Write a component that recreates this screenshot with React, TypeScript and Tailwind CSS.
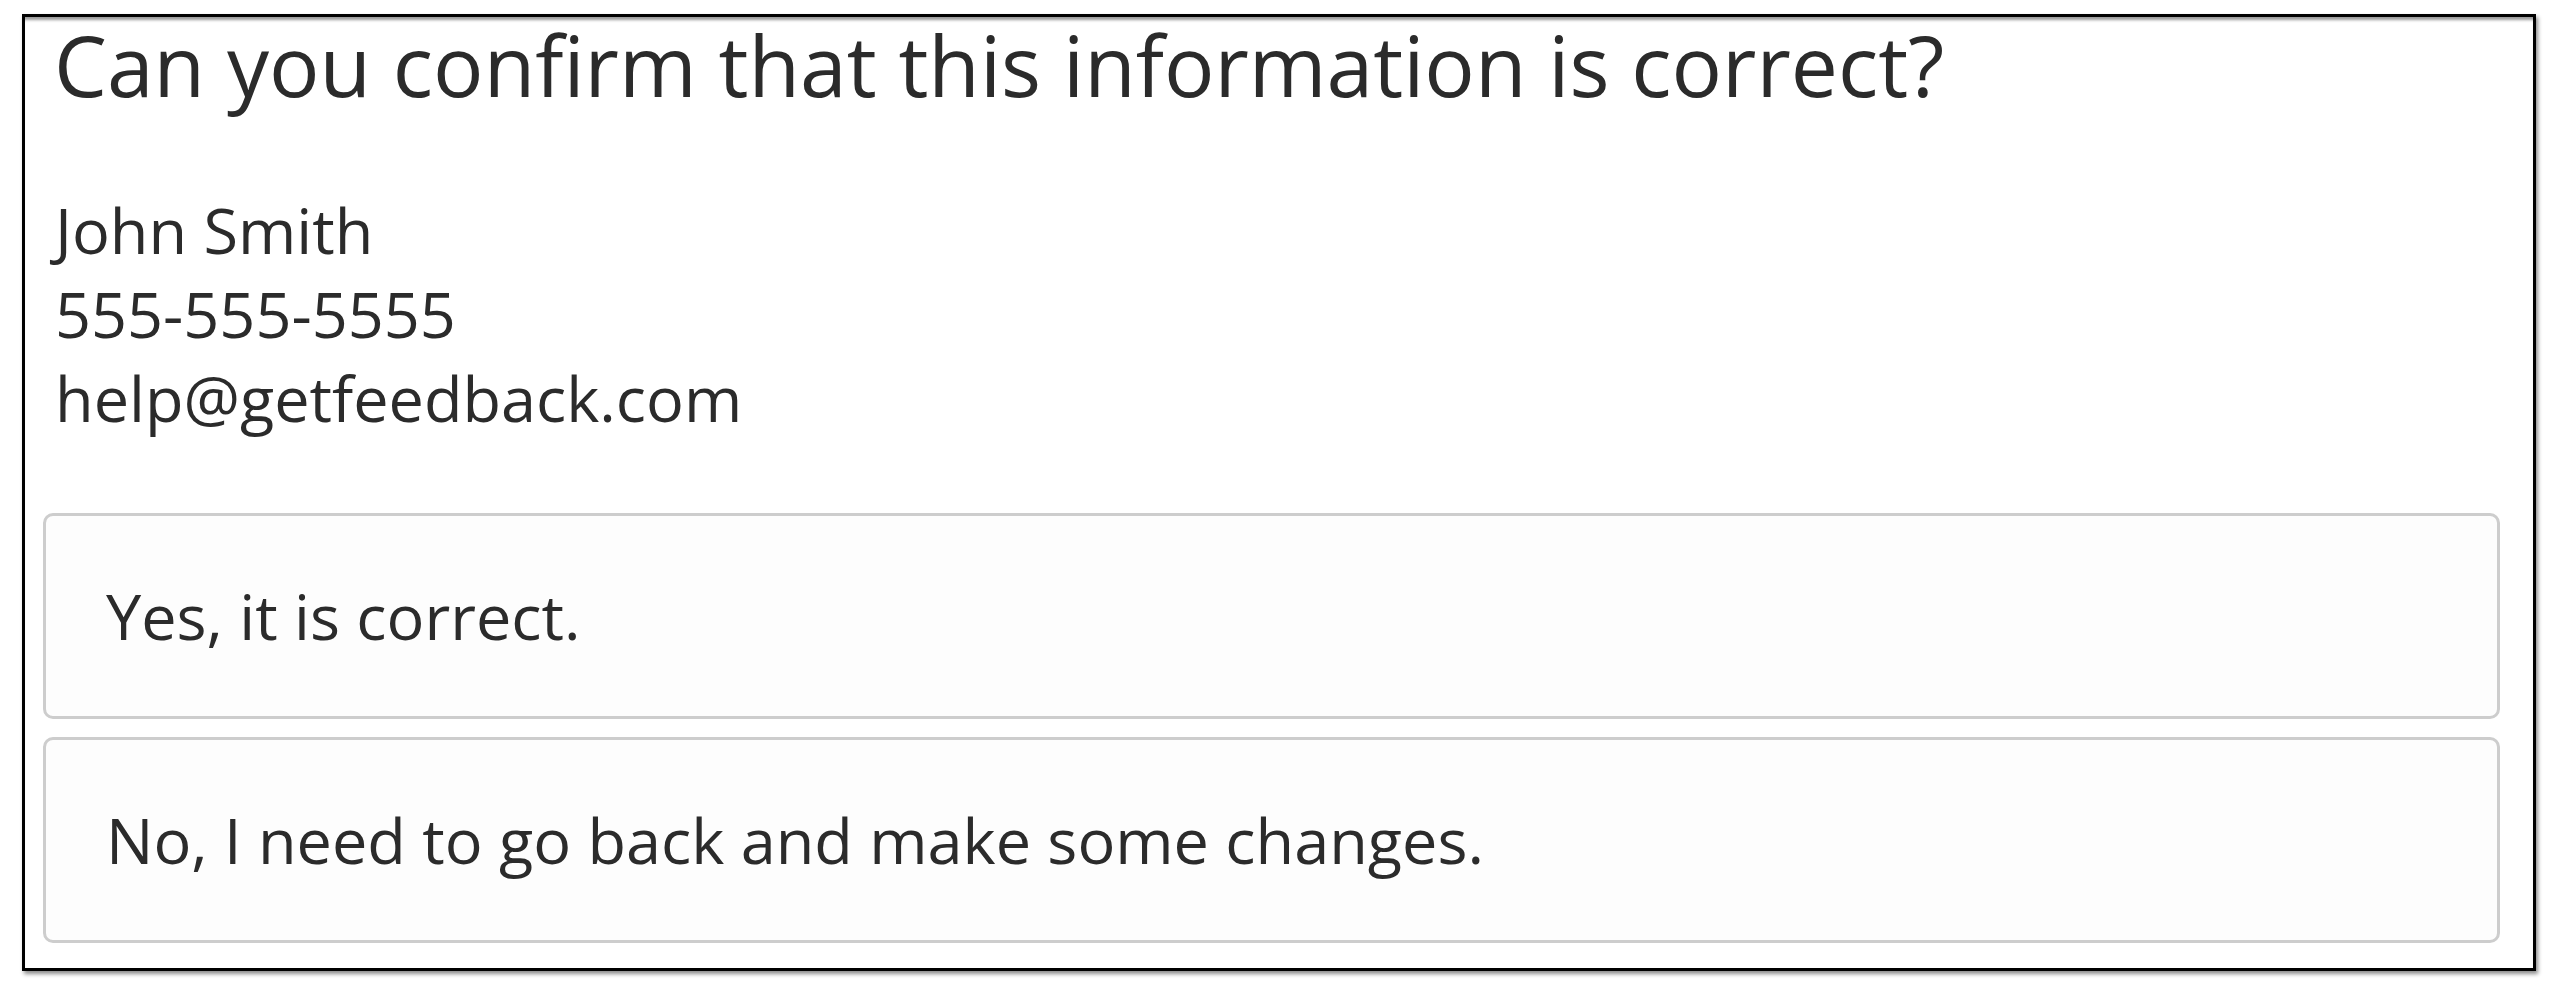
export default function App() {
  const options = ["Yes, it is correct.", "No, I need to go back and make some changes."];

  return (
    <div className="min-h-[986px] w-[2560px] bg-white pt-[14px] pl-[22px] font-['Open_Sans',sans-serif] text-[#2b2b2b]">
      <div className="w-[2514px] border-[3px] border-black bg-white pt-[2px] pr-[33px] pb-[25px] pl-[18px] shadow-[inset_0_5px_3px_-2px_rgba(0,0,0,0.4),2px_3px_4px_rgba(0,0,0,0.45)]">
        <h1 className="pl-[11px] text-[84px] leading-[92px] font-normal">
          Can you confirm that this information is correct?
        </h1>
        <div className="mt-[77px] pl-[12px] text-[63px] leading-[84px]">
          <p>John Smith</p>
          <p>555-555-5555</p>
          <p>help@getfeedback.com</p>
        </div>
        <div className="mt-[73px] flex flex-col gap-[18px]">
          {options.map((option) => (
            <div
              key={option}
              className="rounded-[10px] border-[3px] border-[#cdcdcd] bg-[#fdfdfd] px-[60px] py-[58px] text-[63px] leading-[84px]"
            >
              {option}
            </div>
          ))}
        </div>
      </div>
    </div>
  );
}
